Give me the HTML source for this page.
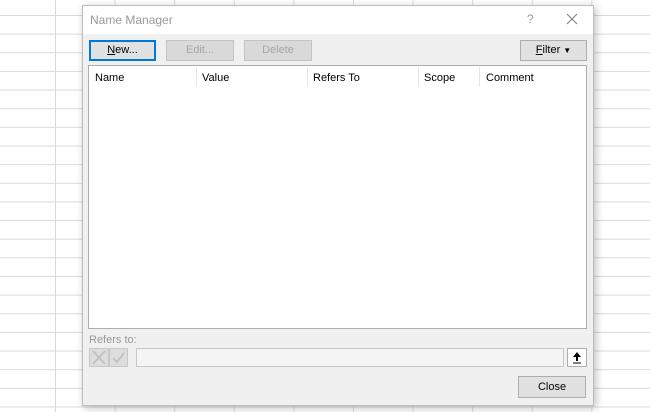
<!DOCTYPE html>
<html><head><style>
body{margin:0;width:650px;height:412px;overflow:hidden;font-family:"Liberation Sans",sans-serif;font-size:11px;position:relative;
background-color:#fff;
background-image:linear-gradient(#dadada 1px,transparent 1px),linear-gradient(90deg,#dadada 1px,transparent 1px);
background-size:59.6px 18.65px;background-position:55px 15px;}
.dlg{position:absolute;left:82px;top:5px;width:510px;height:399px;background:#f0f0f0;border:1px solid #bdbdbd;box-shadow:2px 2px 8px rgba(0,0,0,.25)}
.title{position:absolute;left:0;top:0;width:510px;height:28px;background:#fff}
.abs{position:absolute}
.btn{position:absolute;height:19px;background:#e1e1e1;border:1px solid #adadad;text-align:center;line-height:19px;color:#000;box-sizing:content-box}
.dis{color:#a6a6a6;background:#d9d9d9;border-color:#c4c4c4}
.hd{position:absolute;top:6px;color:#000}
.sep{position:absolute;top:1px;width:1px;height:20px;background:#e5e5e5}
</style></head><body>
<div class="dlg">
 <div class="title"><span class="abs" style="left:7px;top:7px;font-size:12px;color:#999">Name Manager</span>
 <span class="abs" style="left:444px;top:6px;font-size:12px;color:#999">?</span>
 <svg class="abs" style="left:483px;top:7px" width="12" height="12"><path d="M1 1L11 11M11 1L1 11" stroke="#888" stroke-width="1.2"/></svg></div>
 <div class="btn" style="left:6px;top:34px;width:65px;border:1px solid #0078d7;box-shadow:inset 0 0 0 1px #0078d7"><u>N</u>ew...</div>
 <div class="btn dis" style="left:83px;top:34px;width:66px">Edit...</div>
 <div class="btn dis" style="left:161px;top:34px;width:66px">Delete</div>
 <div class="btn" style="left:437px;top:34px;width:65px"><u>F</u>ilter <span style="font-size:8px">▼</span></div>
 <div class="abs" style="left:5px;top:59px;width:497px;height:262px;background:#fff;border:1px solid #adadad">
  <span class="hd" style="left:6px">Name</span><div class="sep" style="left:107px"></div>
  <span class="hd" style="left:113px">Value</span><div class="sep" style="left:218px"></div>
  <span class="hd" style="left:224px">Refers To</span><div class="sep" style="left:329px"></div>
  <span class="hd" style="left:335px">Scope</span><div class="sep" style="left:390px"></div>
  <span class="hd" style="left:397px">Comment</span>
 </div>
 <span class="abs" style="left:6px;top:328px;color:#999">Refers to:</span>
 <div class="abs" style="left:6px;top:342px;width:18px;height:17px;background:#ddd;border:1px solid #c8c8c8"><svg width="18" height="17"><path d="M3 2L15 15M15 2L3 15" stroke="#bbb" stroke-width="1.5"/></svg></div>
 <div class="abs" style="left:26px;top:342px;width:17px;height:17px;background:#ddd;border:1px solid #c8c8c8"><svg width="17" height="17"><path d="M3 9L7 13L14 4" stroke="#bbb" stroke-width="1.5" fill="none"/></svg></div>
 <div class="abs" style="left:53px;top:342px;width:426px;height:17px;background:#f4f4f4;border:1px solid #c8c8c8"></div>
 <div class="abs" style="left:484px;top:342px;width:18px;height:17px;background:#fff;border:1px solid #adadad"><svg width="18" height="17"><path d="M9 3L5 8H8V12H10V8H13Z" fill="#000"/><path d="M5 14H13" stroke="#000"/></svg></div>
 <div class="btn" style="left:435px;top:370px;width:66px;height:20px;line-height:20px">Close</div>
</div>
</body></html>
